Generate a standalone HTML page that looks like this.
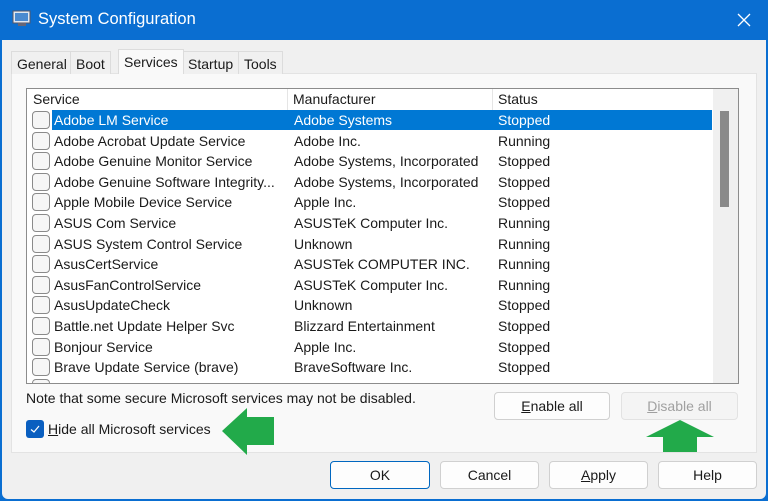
<!DOCTYPE html><html><head><style>
*{box-sizing:border-box;margin:0;padding:0}
body{width:768px;height:501px;overflow:hidden;background:#0a6ed1;font-family:"Liberation Sans",sans-serif;font-size:14px;color:#1a1a1a;position:relative}
.win{position:absolute;left:2px;top:0;width:764px;height:499px;background:#f0f0f0;border-radius:0 0 6px 6px}
.title{position:absolute;left:0;top:0;width:768px;height:40px;background:#0a6ed1;color:#fff;font-size:16.5px}
.abs{position:absolute}
.tab{position:absolute;top:51px;height:23px;font-size:14px;padding:4px 5px;border:1px solid #dcdcdc;border-bottom:none;background:#f0f0f0}
.panel{position:absolute;left:11px;top:73px;width:746px;height:380px;background:#f9f9f9;border:1px solid #e3e3e3}
.list{position:absolute;left:26px;top:88px;width:713px;height:296px;background:#fff;border:1px solid #8c8c8c;overflow:hidden}
.row{position:absolute;left:0;height:20.6px;width:686px;font-size:14px;line-height:20px}
.cb{position:absolute;left:5px;top:1px;width:18px;height:18px;border:1px solid #8a8a8a;border-radius:4px;background:#f6f6f6}
.c1{position:absolute;left:27px}.c2{position:absolute;left:267px}.c3{position:absolute;left:471px}
.btn{position:absolute;height:28px;background:#fdfdfd;border:1px solid #d0d0d0;border-radius:4px;text-align:center;line-height:26px;font-size:14px}
</style></head><body>
<div class="win"></div>
<div class="title">
<svg class="abs" style="left:12px;top:10px" width="20" height="18"><rect x="1" y="1" width="17" height="12" fill="#dfe8f2" stroke="#556" /><rect x="3" y="3" width="13" height="8" fill="#4a8ad0"/><rect x="6" y="13" width="8" height="3" fill="#667"/></svg>
<div class="abs" style="left:38px;top:10px">System Configuration</div>
<svg class="abs" style="left:737px;top:13px" width="14" height="14"><path d="M1 1L13 13M13 1L1 13" stroke="#fff" stroke-width="1.3"/></svg>
</div>
<div class="panel"></div>
<div class="tab" style="left:11px">General</div>
<div class="tab" style="left:70px">Boot</div>
<div class="tab" style="left:118px;top:49px;height:25px;background:#f9f9f9;z-index:2">Services</div>
<div class="tab" style="left:182px">Startup</div>
<div class="tab" style="left:238px">Tools</div>
<div class="list">
<div class="abs" style="left:0;top:0;width:686px;height:21px;font-size:14px;line-height:21px">
<span class="abs" style="left:6px">Service</span><span class="abs" style="left:260px;top:0;height:21px;border-left:1px solid #e5e5e5"></span><span class="abs" style="left:266px">Manufacturer</span><span class="abs" style="left:465px;top:0;height:21px;border-left:1px solid #e5e5e5"></span><span class="abs" style="left:471px">Status</span></div>
<div class="abs" style="left:686px;top:0;width:26px;height:296px;background:#f0f0f0"><div class="abs" style="left:7px;top:22px;width:9px;height:96px;background:#8a8a8a"></div></div>
<div class="row" style="top:21px"><div class="cb"></div><div class="abs" style="left:25px;top:0;width:660px;height:20px;background:#0078d4"></div><span class="c1" style="color:#fff">Adobe LM Service</span><span class="c2" style="color:#fff">Adobe Systems</span><span class="c3" style="color:#fff">Stopped</span></div>
<div class="row" style="top:41.6px"><div class="cb"></div><span class="c1">Adobe Acrobat Update Service</span><span class="c2">Adobe Inc.</span><span class="c3">Running</span></div>
<div class="row" style="top:62.2px"><div class="cb"></div><span class="c1">Adobe Genuine Monitor Service</span><span class="c2">Adobe Systems, Incorporated</span><span class="c3">Stopped</span></div>
<div class="row" style="top:82.8px"><div class="cb"></div><span class="c1">Adobe Genuine Software Integrity...</span><span class="c2">Adobe Systems, Incorporated</span><span class="c3">Stopped</span></div>
<div class="row" style="top:103.4px"><div class="cb"></div><span class="c1">Apple Mobile Device Service</span><span class="c2">Apple Inc.</span><span class="c3">Stopped</span></div>
<div class="row" style="top:124px"><div class="cb"></div><span class="c1">ASUS Com Service</span><span class="c2">ASUSTeK Computer Inc.</span><span class="c3">Running</span></div>
<div class="row" style="top:144.6px"><div class="cb"></div><span class="c1">ASUS System Control Service</span><span class="c2">Unknown</span><span class="c3">Running</span></div>
<div class="row" style="top:165.2px"><div class="cb"></div><span class="c1">AsusCertService</span><span class="c2">ASUSTek COMPUTER INC.</span><span class="c3">Running</span></div>
<div class="row" style="top:185.8px"><div class="cb"></div><span class="c1">AsusFanControlService</span><span class="c2">ASUSTeK Computer Inc.</span><span class="c3">Running</span></div>
<div class="row" style="top:206.4px"><div class="cb"></div><span class="c1">AsusUpdateCheck</span><span class="c2">Unknown</span><span class="c3">Stopped</span></div>
<div class="row" style="top:227px"><div class="cb"></div><span class="c1">Battle.net Update Helper Svc</span><span class="c2">Blizzard Entertainment</span><span class="c3">Stopped</span></div>
<div class="row" style="top:247.6px"><div class="cb"></div><span class="c1">Bonjour Service</span><span class="c2">Apple Inc.</span><span class="c3">Stopped</span></div>
<div class="row" style="top:268.2px"><div class="cb"></div><span class="c1">Brave Update Service (brave)</span><span class="c2">BraveSoftware Inc.</span><span class="c3">Stopped</span></div>
<div class="row" style="top:288.8px"><div class="cb"></div></div>
</div>
<div class="abs" style="left:26px;top:390px">Note that some secure Microsoft services may not be disabled.</div>
<div class="abs" style="left:26px;top:420px;width:18px;height:18px;background:#0a5fc0;border-radius:3px"><svg width="18" height="18"><path d="M5 9.5L8 12L13 6" stroke="#fff" fill="none" stroke-width="1.2"/></svg></div>
<div class="abs" style="left:48px;top:421px"><u>H</u>ide all Microsoft services</div>
<svg class="abs" style="left:220px;top:408px" width="56" height="50"><path d="M2 23L27 0V9H54V37H27V47Z" fill="#22aa4a"/></svg>
<div class="btn" style="left:494px;top:392px;width:116px"><u>E</u>nable all</div>
<div class="btn" style="left:621px;top:392px;width:117px;background:#f4f4f4;color:#a0a0a0;border-color:#e2e2e2"><u>D</u>isable all</div>
<svg class="abs" style="left:646px;top:420px" width="68" height="33"><path d="M0 17L34 0L68 17H51V32H17V17Z" fill="#22aa4a"/></svg>
<div class="btn" style="left:330px;top:461px;width:100px;border:1px solid #0067c0"><span>OK</span></div>
<div class="btn" style="left:440px;top:461px;width:99px">Cancel</div>
<div class="btn" style="left:549px;top:461px;width:99px"><u>A</u>pply</div>
<div class="btn" style="left:658px;top:461px;width:99px">Help</div>
</body></html>
